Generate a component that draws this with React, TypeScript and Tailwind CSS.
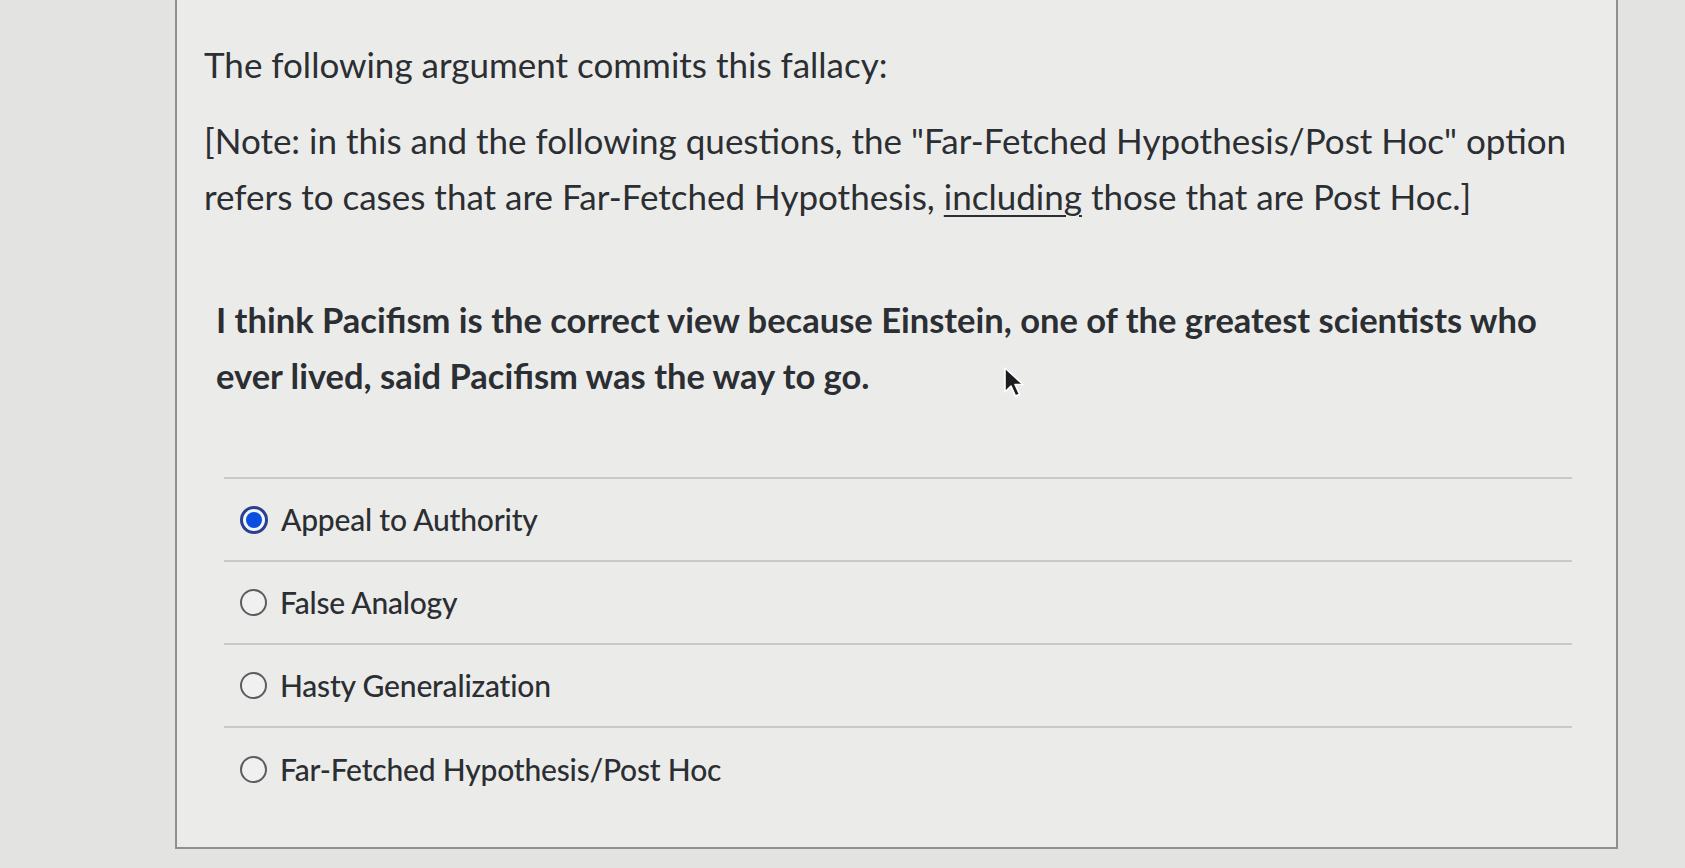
import React from 'react';

const options = [
  { label: 'Appeal to Authority', checked: true },
  { label: 'False Analogy', checked: false },
  { label: 'Hasty Generalization', checked: false },
  { label: 'Far-Fetched Hypothesis/Post Hoc', checked: false },
];

const Radio: React.FC<{ checked: boolean }> = ({ checked }) =>
  checked ? (
    <span className="flex h-[28px] w-[28px] shrink-0 items-center justify-center rounded-full border-[3px] border-[#2b3f8f] bg-[#f4f5f6]">
      <span className="h-[16px] w-[16px] rounded-full bg-[#0b4fe0]" />
    </span>
  ) : (
    <span className="h-[27px] w-[27px] shrink-0 rounded-full border-2 border-[#5b5e60] bg-[#eff0ef]" />
  );

const App: React.FC = () => {
  return (
    <div
      className="h-[868px] w-full overflow-hidden bg-[#e3e4e2] text-[#2b2e32]"
      style={{ fontFamily: 'Lato, "Open Sans", sans-serif' }}
    >
      <div className="relative ml-[175px] h-[849px] w-[1443px] border-x-2 border-b-2 border-[#8d908e] bg-[#ebecea] pl-[27px] pr-[30px] pt-[38px]">
        <p className="text-[35px] leading-[52px]">The following argument commits this fallacy:</p>

        <p className="mt-[22px] text-[35px] leading-[56px]">
          [Note: in this and the following questions, the "Far-Fetched Hypothesis/Post Hoc" option
          <br />
          refers to cases that are Far-Fetched Hypothesis,{' '}
          <span className="underline decoration-2 underline-offset-[5px]">including</span> those that are Post Hoc.]
        </p>

        <p className="mt-[68px] pl-[12px] text-[34.5px] font-bold leading-[56px]">
          I think Pacifism is the correct view because Einstein, one of the greatest scientists who
          <br />
          ever lived, said Pacifism was the way to go.
        </p>

        {/* mouse pointer */}
        <svg
          className="absolute left-[826px] top-[366px] h-[34px] w-[24px]"
          viewBox="0 0 24 34"
          aria-hidden
        >
          <path
            d="M2 2 L2 26 L8 20 L12.5 30 L16.5 28.2 L12 18.5 L20 18.5 Z"
            fill="#1c1d1f"
            stroke="#ffffff"
            strokeWidth="1.6"
            strokeLinejoin="round"
          />
        </svg>

        <div className="mt-[73px] ml-[20px] mr-[14px] border-t-2 border-[#c9cac8]">
          {options.map((o, i) => (
            <div
              key={o.label}
              className={`flex h-[83px] items-center ${
                i < options.length - 1 ? 'border-b-2 border-[#c9cac8]' : ''
              }`}
            >
              <span className="ml-[16px] flex items-center gap-[13px]">
                <Radio checked={o.checked} />
                <span className="text-[30px] font-medium tracking-[-0.2px]">{o.label}</span>
              </span>
            </div>
          ))}
        </div>
      </div>
    </div>
  );
};

export default App;
